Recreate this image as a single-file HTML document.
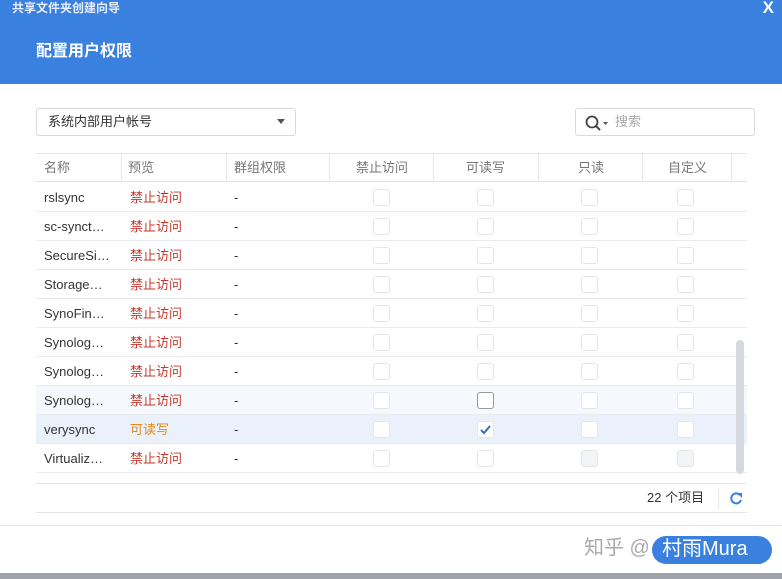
<!DOCTYPE html><html><head><meta charset="utf-8"><style>
*{box-sizing:border-box;margin:0;padding:0}
body{width:782px;height:579px;overflow:hidden;background:#fff;font-family:"Liberation Sans","Noto Sans CJK SC",sans-serif;position:relative;color:#333}
.hd{position:absolute;left:0;top:0;width:782px;height:84px;background:#3a80df;color:#fff}
.t1{position:absolute;left:12px;top:0;line-height:17px;font-size:12px;font-weight:bold;color:#e6efff}
.x{position:absolute;right:8px;top:0;line-height:16px;font-size:17px;font-weight:bold}
.t2{position:absolute;left:36px;top:40px;line-height:24px;font-size:16px;font-weight:bold}
.sel{position:absolute;left:36px;top:108px;width:260px;height:28px;border:1px solid #d6dbe2;border-radius:3px;font-size:13px;padding:0 11px;line-height:26px}
.sel:after{content:"";position:absolute;right:10px;top:10px;border:4px solid transparent;border-top:5px solid #555}
.srch{position:absolute;left:575px;top:108px;width:180px;height:28px;border:1px solid #d6dbe2;border-radius:3px;font-size:13px;color:#aaa;padding:0 0 0 39px;line-height:26px}
.row{position:absolute;left:36px;width:711px;height:29px;border-bottom:1px solid #e8ebef;font-size:13px}
.row span{position:absolute;top:0;line-height:29px}
.hr{top:153px;height:29px;border-top:1px solid #e3e6ea;border-bottom:1px solid #dfe3e8;color:#777}
.hr span{line-height:27px}
.hr i{position:absolute;top:0;height:28px;border-left:1px solid #e3e6ea}
.cb{position:absolute;top:6px;width:17px;height:17px;border:1px solid #e2e5ea;border-radius:3px;background:#fff}
.red{color:#c5392c}.org{color:#e08a1e}
.ft{position:absolute;left:36px;top:483px;width:711px;height:30px;border-top:1px solid #e3e6ea;border-bottom:1px solid #e3e6ea;font-size:13px}
</style></head><body>
<div class="hd"><div class="t1">共享文件夹创建向导</div><div class="x">X</div><div class="t2">配置用户权限</div></div>
<div class="sel">系统内部用户帐号</div>
<div class="srch"><svg style="position:absolute;left:9px;top:6px" width="26" height="16"><circle cx="7" cy="7" r="5.5" fill="none" stroke="#444" stroke-width="1.8"/><path d="M11 11l4 4" stroke="#444" stroke-width="2"/><path d="M18 7h5l-2.5 3z" fill="#555"/></svg>搜索</div>
<div class="row hr"><span style="left:8px">名称</span><span style="left:92px">预览</span><span style="left:198px">群组权限</span><span style="left:320px">禁止访问</span><span style="left:430px">可读写</span><span style="left:542px">只读</span><span style="left:632px">自定义</span>
<i style="left:85px"></i><i style="left:190px"></i><i style="left:293px"></i><i style="left:397px"></i><i style="left:502px"></i><i style="left:606px"></i><i style="left:695px"></i></div>
<div id="rows"></div>
<div style="position:absolute;left:736px;top:340px;width:8px;height:134px;border-radius:4px;background:#d5d8dc"></div>
<div class="ft"><span style="position:absolute;left:611px;top:0;line-height:28px">22 个项目</span><i style="position:absolute;left:682px;top:5px;height:20px;border-left:1px solid #e3e6ea"></i><svg style="position:absolute;left:693px;top:7px" width="14" height="14"><path d="M11 4A5 5 0 1 0 12 9" fill="none" stroke="#3a80df" stroke-width="2"/><path d="M8 2l5 0l0 5z" fill="#3a80df"/></svg></div>
<div style="position:absolute;left:0;top:525px;width:782px;border-top:1px solid #e3e6ea"></div>
<div style="position:absolute;left:584px;top:534px;font-size:20px;line-height:28px;color:#aaa">知乎 @</div>
<div style="position:absolute;left:652px;top:536px;width:120px;height:28px;border-radius:14px;background:#3a80df;color:#fff;font-size:20px;padding:0 0 0 10px;line-height:26px">村雨Mura</div>
<div style="position:absolute;left:0;top:573px;width:782px;height:6px;background:#9da3aa"></div>
<script>
var d=[["rslsync",0],["sc-synct…",0],["SecureSi…",0],["Storage…",0],["SynoFin…",0],["Synolog…",0],["Synolog…",0],["Synolog…",0,"#f5f8fc"],["verysync",1,"#eaf1fb"],["Virtualiz…",0]],h="";
d.forEach(function(r,i){var y=183+i*29;h+='<div class="row" style="top:'+y+'px;background:'+(r[2]||'#fff')+'"><span style="left:8px">'+r[0]+'</span><span class="'+(r[1]?'org':'red')+'" style="left:94px">'+(r[1]?'可读写':'禁止访问')+'</span><span style="left:198px">-</span>';
[337,441,545,641].forEach(function(x,j){var st='left:'+x+'px;';if(i==7&&j==1)st+='border-color:#999;';if(i==9&&j>1)st+='background:#f2f4f7;';h+='<div class="cb" style="'+st+'">'+(i==8&&j==1?'<svg width="15" height="15"><path d="M3 8l3 3l6-7" fill="none" stroke="#3a6fb5" stroke-width="2"/></svg>':'')+'</div>';});h+='</div>';});
document.getElementById('rows').innerHTML=h;
</script>
</body></html>
